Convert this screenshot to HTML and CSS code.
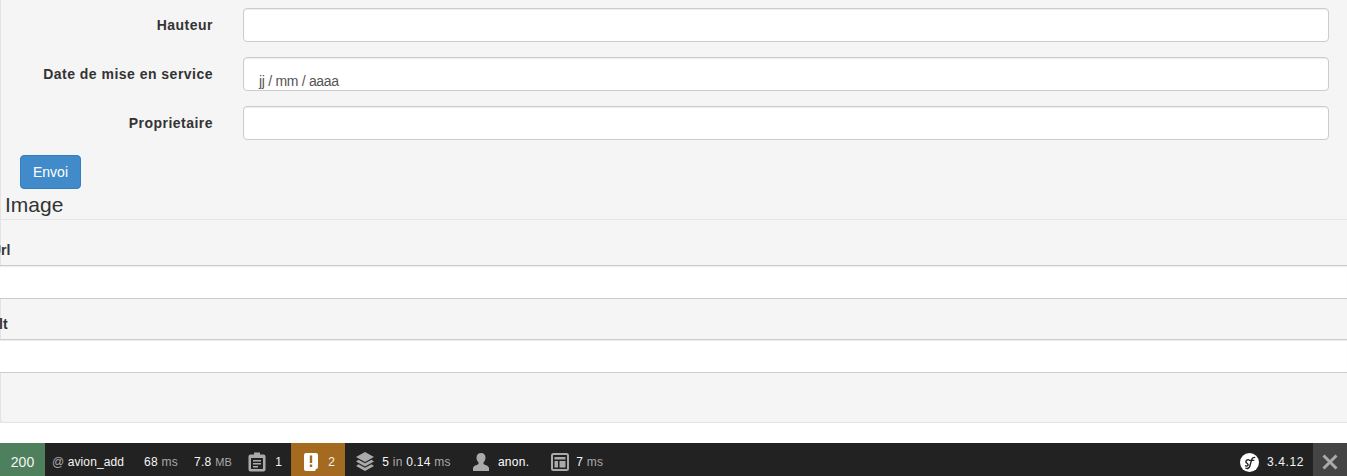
FILE: index.html
```html
<!DOCTYPE html>
<html lang="fr">
<head>
<meta charset="utf-8">
<title>avion_add</title>
<link rel="stylesheet" href="styles.css">
</head>
<body>
<main class="well">
  <form class="form">
    <div class="row"><label class="row-label">Hauteur</label><div class="field"></div></div>
    <div class="row"><label class="row-label">Date de mise en service</label><div class="field field-date">jj / mm / aaaa</div></div>
    <div class="row"><label class="row-label">Proprietaire</label><div class="field"></div></div>
    <button class="btn" type="button">Envoi</button>
  </form>
  <h3 class="legend">Image</h3>
  <div class="wide-group"><label class="wide-label">Url</label><div class="wide-input"></div></div>
  <div class="wide-group"><label class="wide-label">Alt</label><div class="wide-input"></div></div>
  <div class="inner-well"></div>
</main>
<footer class="toolbar">
  <div class="tb tb-status">200</div>
  <div class="tb tb-route"><span class="mute">@</span> avion_add</div>
  <div class="tb tb-time">68 <span class="mute">ms</span></div>
  <div class="tb tb-mem">7.8 <span class="mute small">MB</span></div>
  <div class="tb tb-logs">
    <svg class="ic" viewBox="0 0 18 20" width="18" height="20"><path fill="#aaa" d="M6 .5h6v2h3.500a2 2 0 0 1 2 2v13a2 2 0 0 1-2 2H2.500a2 2 0 0 1-2-2v-13a2 2 0 0 1 2-2H6z"/><path fill="#222" d="M3 6h12v11H3z"/><path fill="#aaa" d="M5 8h8v1.500H5zM5 11h8v1.500H5zM5 14h5v1.500H5z"/></svg>
    <span class="val">1</span>
  </div>
  <div class="tb tb-warn">
    <svg class="ic" viewBox="0 0 16 20" width="16" height="20"><path fill="#fff" d="M3 1h10a2 2 0 0 1 2 2v12a2 2 0 0 1-2 2l-1 2H3a2 2 0 0 1-2-2V3a2 2 0 0 1 2-2z"/><path fill="#a46a1f" d="M6.800 3.500h2.400v7.500H6.800zM6.800 12.500h2.400V15H6.800z"/></svg>
    <span class="val">2</span>
  </div>
  <div class="tb tb-db">
    <svg class="ic" viewBox="0 0 20 20" width="20" height="20"><path fill="#aaa" d="M10 0l9 5-9 5-9-5z"/><path fill="#aaa" d="M3.500 7.700L10 11.300l6.500-3.600L19 9.500l-9 5-9-5z"/><path fill="#aaa" d="M3.500 12.200L10 15.800l6.500-3.600L19 14l-9 5-9-5z"/></svg>
    <span class="val">5 <span class="mute">in</span> 0.14 <span class="mute">ms</span></span>
  </div>
  <div class="tb tb-user">
    <svg class="ic" viewBox="0 0 18 20" width="18" height="20"><path fill="#aaa" d="M9 1c2.800 0 4.500 2 4.500 4.800 0 2-1 3.800-2 4.700v1.200c0 1 5.500 1.800 5.500 4.300v3H1v-3c0-2.500 5.500-3.300 5.500-4.300v-1.200c-1-.9-2-2.700-2-4.700C4.500 3 6.200 1 9 1z"/></svg>
    <span class="val white">anon.</span>
  </div>
  <div class="tb tb-twig">
    <svg class="ic" viewBox="0 0 20 20" width="20" height="20"><path fill="none" stroke="#aaa" stroke-width="2" d="M3.500 2h13A1.500 1.500 0 0 1 18 3.500v13a1.500 1.500 0 0 1-1.500 1.500h-13A1.500 1.500 0 0 1 2 16.500v-13A1.500 1.500 0 0 1 3.500 2z"/><path fill="#aaa" d="M4.500 5h11v2.500h-11zM4.500 9h3.500v6.500H4.500zM9.500 9h6v6.500h-6z"/></svg>
    <span class="val">7 <span class="mute">ms</span></span>
  </div>
  <div class="tb-spacer"></div>
  <div class="tb tb-sf">
    <svg class="sf" viewBox="0 0 20 20" width="19" height="19"><circle cx="10" cy="10" r="10" fill="#fff"/><path fill="none" stroke="#222" stroke-width="1.500" d="M16 4.800c-1.700-.7-3.200.4-3.800 2.400l-1.900 6.800c-.6 2.100-2.400 2.800-4.600 1.900M9.500 7.800h5.500"/><path fill="none" stroke="#222" stroke-width="1.500" d="M9.600 7.200c-1.900-.5-3.500.7-3.400 2.100.1 1.300 2.100 1.700 2.300 3 .2 1.200-1.500 2-3.200 1.100"/></svg>
    <span class="val">3.4.12</span>
  </div>
  <div class="tb-close">
    <svg viewBox="0 0 16 16" width="16" height="16"><path fill="none" stroke="#aaa" stroke-width="3" d="M1.500 1.500l13 13M14.500 1.500l-13 13"/></svg>
  </div>
</footer>
</body>
</html>
```
FILE: styles.css
```css
html, body { margin: 0; padding: 0; }
body {
  width: 1347px;
  height: 476px;
  overflow: hidden;
  background: #fff;
  color: #333;
  font-family: "Liberation Sans", Arial, sans-serif;
  font-size: 14px;
  display: flex;
  flex-direction: column;
}
.well {
  box-sizing: border-box;
  height: 423px;
  background: #f5f5f5;
  border-left: 1px solid #e3e3e3;
  flex: none;
}
.form { padding-top: 8px; }
.row { display: flex; align-items: flex-start; height: 34px; margin-bottom: 15px; }
.row-label {
  width: 212px;
  flex: none;
  text-align: right;
  font-weight: 700;
  letter-spacing: 0.48px;
  line-height: 20px;
  padding-top: 7px;
}
.field {
  box-sizing: border-box;
  width: 1086px;
  height: 34px;
  margin-left: 30px;
  background: #fff;
  border: 1px solid #ccc;
  border-radius: 4px;
  box-shadow: inset 0 1px 1px rgba(0,0,0,.075);
  color: #555;
}
.field-date { padding: 14px 0 0 15px; line-height: 18px; overflow: hidden; letter-spacing: -0.3px; }
.btn {
  display: block;
  margin: 0 0 0 19px;
  box-sizing: border-box;
  width: 61px;
  height: 34px;
  background: #428bca;
  border: 1px solid #357ebd;
  border-radius: 4px;
  color: #fff;
  font: 14px "Liberation Sans", Arial, sans-serif;
  padding: 0;
}
.legend {
  margin: 0 0 0 -1px;
  box-sizing: border-box;
  height: 31px;
  padding: 4px 0 0 5px;
  font-size: 21px;
  font-weight: 400;
  line-height: 24px;
  border-bottom: 1px solid #e5e5e5;
}
.wide-group { margin-left: -1px; }
.wide-label {
  display: block;
  height: 45px;
  box-sizing: border-box;
  padding-top: 20px;
  margin-left: -9px;
  font-weight: 700;
  line-height: 20px;
}
.wide-input {
  box-sizing: border-box;
  height: 34px;
  background: #fff;
  border-top: 1px solid #ccc;
  border-bottom: 1px solid #ccc;
  box-shadow: inset 0 1px 1px rgba(0,0,0,.075);
}
.wide-group + .wide-group .wide-label { height: 40px; padding-top: 15px; margin-left: -11px; }
.inner-well {
  box-sizing: border-box;
  height: 50px;
  margin-left: -1px;
  width: 1360px;
  background: #f5f5f5;
  border: 1px solid #e3e3e3;
  border-top: 0;
  border-radius: 0 0 4px 4px;
}
.toolbar {
  margin-top: 20px;
  height: 33px;
  background: #222;
  color: #f5f5f5;
  font-size: 12px;
  display: flex;
  align-items: stretch;
  flex: none;
}
.tb {
  display: flex;
  align-items: center;
  white-space: pre;
  box-sizing: border-box;
  padding-top: 5px;
  line-height: 16px;
  letter-spacing: 0.27px;
}
.mute { color: #aaa; }
.small { font-size: 11px; }
.white { color: #fff; }
.ic { flex: none; display: block; }
.val { white-space: pre; }
.tb-status { width: 45px; background: #4f805d; justify-content: center; font-size: 14px; letter-spacing: 0; }
.tb-route { margin-left: 7px; letter-spacing: 0.1px; }
.tb-time { margin-left: 20px; }
.tb-mem { margin-left: 16px; }
.tb-logs { margin-left: 16px; width: 43px; gap: 9px; }
.tb-warn { background: #a46a1f; width: 54px; padding-left: 12px; gap: 9px; }
.tb-db { margin-left: 10px; gap: 7px; }
.tb-user { margin-left: 21px; gap: 8px; }
.tb-twig { margin-left: 21px; gap: 6px; }
.tb-spacer { flex: 1; }
.tb-sf { gap: 8px; margin-right: 9px; letter-spacing: 0.6px; }
.tb-close { width: 34px; background: #444; display: flex; align-items: center; justify-content: center; padding-top: 4px; box-sizing: border-box; }
```
